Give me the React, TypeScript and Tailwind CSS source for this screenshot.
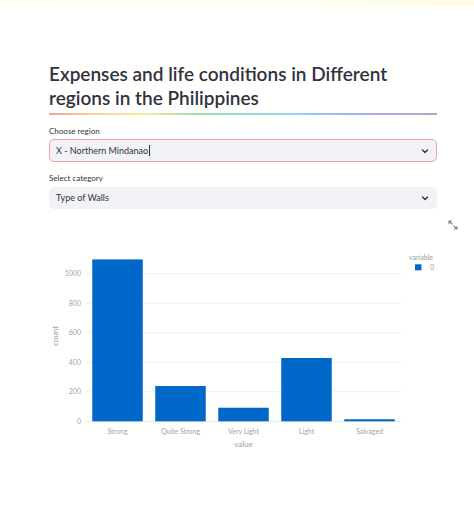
const bars = [
  { label: "Strong", value: 1097 },
  { label: "Quite Strong", value: 239 },
  { label: "Very Light", value: 92 },
  { label: "Light", value: 429 },
  { label: "Salvaged", value: 14 },
];

const ticks = [0, 200, 400, 600, 800, 1000];

const plotLeft = 37;
const plotRight = 352;
const zeroY = 190.3;
const scale = 0.1476;
const step = 63;
const barW = 50.5;

const Chevron = () => (
  <svg width="10" height="10" viewBox="0 0 10 10" className="shrink-0">
    <path d="M2.5 4 L5 6.5 L7.5 4" fill="none" stroke="#31333f" strokeWidth="1.4" strokeLinecap="round" strokeLinejoin="round" />
  </svg>
);

const ExpandIcon = () => (
  <svg width="10" height="10" viewBox="0 0 10 10">
    <path d="M1 1 L4 4 M1 1 L1 3.5 M1 1 L3.5 1 M9 9 L6 6 M9 9 L9 6.5 M9 9 L6.5 9" fill="none" stroke="#808495" strokeWidth="1.1" strokeLinecap="round" />
  </svg>
);

const Chart = () => (
  <svg width="388" height="230" viewBox="0 0 388 230" className="block font-['Lato',sans-serif]">
    {ticks.map((t) => {
      const y = zeroY - t * scale;
      return (
        <g key={t}>
          <line x1={plotLeft} x2={plotRight} y1={y} y2={y} stroke={t === 0 ? "#e1e4ea" : "#eef0f4"} strokeWidth="1" />
          <text x="32" y={y + 2.5} textAnchor="end" fontSize="7" fill="#a0a3ad">
            {t}
          </text>
        </g>
      );
    })}
    {bars.map((b, i) => {
      const cx = plotLeft + step * (i + 0.5);
      const h = b.value * scale;
      return (
        <g key={b.label}>
          <rect x={cx - barW / 2} y={zeroY - h} width={barW} height={h} fill="#0068c9" />
          <text x={cx} y="203" textAnchor="middle" fontSize="7" fill="#a0a3ad">
            {b.label}
          </text>
        </g>
      );
    })}
    <text x="194.5" y="216" textAnchor="middle" fontSize="8" fill="#9a9da8">
      value
    </text>
    <text x="0" y="0" transform="translate(9 105) rotate(-90)" textAnchor="middle" fontSize="8" fill="#9a9da8">
      count
    </text>
    <text x="360" y="28.5" fontSize="7" fill="#9a9da8">
      variable
    </text>
    <rect x="366" y="33.3" width="6.5" height="6" fill="#0068c9" />
    <text x="381" y="39" fontSize="7" fill="#9a9da8">
      0
    </text>
  </svg>
);

export default function App() {
  return (
    <div className="min-h-[520px] bg-[#fffffd] font-['Lato',sans-serif] text-[#31333f]">
      <div className="h-[6px] bg-gradient-to-r from-[#fffdf2] via-[#fffff4] to-[#fffbe6]" />
      <div className="pl-[49px] pr-[37px] pt-[56px]">
        <h1 className="text-[19px] font-semibold leading-[24px]">
          Expenses and life conditions in Different
          <br />
          regions in the Philippines
        </h1>
        <div className="mt-[3px] h-[2px] bg-[linear-gradient(to_right,#f3a0a0,#fbd29a,#f6ec9a,#9edcae,#92dccf,#92d3f0,#9bbbe8,#b7a3ec,#a9abb8)]" />

        <div className="mt-[10px] text-[8px] leading-[12px] text-[#31333f]">Choose region</div>
        <div className="mt-[2px] flex h-[23px] items-center justify-between rounded-[5px] border border-[#f2a3aa] bg-[#f0f2f6] pl-[6px] pr-[6px]">
          <div className="flex items-center text-[9px]">
            <span>X - Northern Mindanao</span>
            <span className="ml-[1px] inline-block h-[11px] w-px bg-[#31333f]" />
          </div>
          <Chevron />
        </div>

        <div className="mt-[10px] text-[8px] leading-[12px] text-[#31333f]">Select category</div>
        <div className="mt-[3px] flex h-[22px] items-center justify-between rounded-[5px] border border-transparent bg-[#f0f2f6] pl-[6px] pr-[6px]">
          <span className="text-[9px]">Type of Walls</span>
          <Chevron />
        </div>

        <div className="relative mt-[22px]">
          <div className="absolute right-[-21px] top-[-11px]">
            <ExpandIcon />
          </div>
          <Chart />
        </div>
      </div>
    </div>
  );
}
